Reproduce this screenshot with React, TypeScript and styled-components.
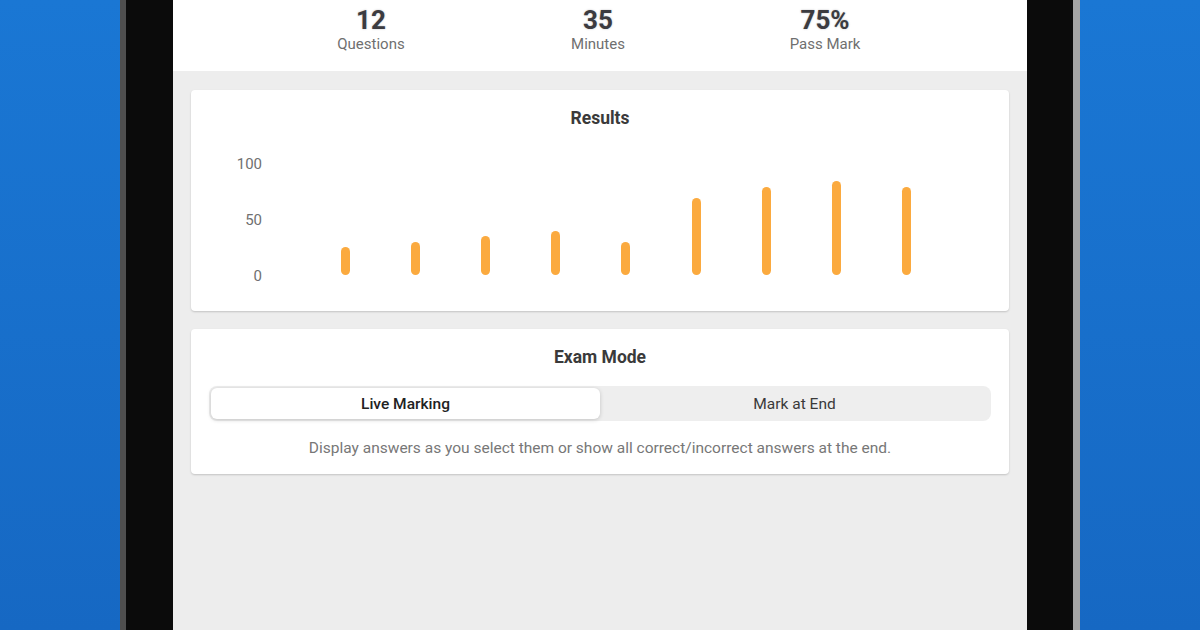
import React from 'react';
import styled, { createGlobalStyle } from 'styled-components';

const GlobalStyle = createGlobalStyle`
  html, body {
    margin: 0;
    padding: 0;
  }
  body {
    font-family: Roboto, "Noto Sans", "Liberation Sans", sans-serif;
  }
`;

const Page = styled.div`
  width: 1200px;
  height: 630px;
  overflow: hidden;
  display: flex;
  justify-content: center;
  background: linear-gradient(180deg, #1a77d4 0%, #1668c3 100%);
`;

const Device = styled.div`
  width: 960px;
  height: 630px;
  box-sizing: border-box;
  display: flex;
  background: #0b0b0b;
  border-left: 6px solid #4f4f4f;
  border-right: 7px solid #a4a4a4;
  padding: 0 46px 0 47px;
`;

const Screen = styled.div`
  flex: 1;
  display: flex;
  flex-direction: column;
  background: #ededed;
`;

const Header = styled.div`
  height: 71px;
  box-sizing: border-box;
  background: #ffffff;
  display: flex;
  align-items: flex-end;
  justify-content: center;
  padding-bottom: 18px;
`;

const StatsRow = styled.div`
  display: grid;
  grid-template-columns: repeat(3, 227px);
  transform: translateX(-2px);
`;

const Stat = styled.div`
  display: flex;
  flex-direction: column;
  align-items: center;
`;

const StatValue = styled.div`
  font-size: 26px;
  line-height: 30px;
  font-weight: 700;
  color: #3b3b40;
  text-shadow: 0 0 2px rgba(60, 60, 70, 0.35);
`;

const StatLabel = styled.div`
  font-size: 15px;
  line-height: 18px;
  color: #6f6f6f;
`;

const Body = styled.div`
  display: flex;
  flex-direction: column;
  gap: 18px;
  padding: 19px 18px 0;
`;

const Card = styled.div`
  background: #ffffff;
  border-radius: 4px;
  box-shadow: 0 1px 2px rgba(0, 0, 0, 0.18);
  display: flex;
  flex-direction: column;
  padding: 18px 18px 16px;
`;

const CardTitle = styled.div`
  font-size: 17.5px;
  line-height: 20px;
  font-weight: 700;
  color: #3a3a3a;
  text-align: center;
`;

const Chart = styled.div`
  display: flex;
  margin: 27px 0 10px -18px;
  height: 130px;
`;

const YAxis = styled.div`
  width: 71px;
  display: flex;
  flex-direction: column;
  justify-content: space-between;
  align-items: flex-end;
  font-size: 15px;
  line-height: 18px;
  color: #707070;
`;

const Plot = styled.div`
  margin-left: 48px;
  width: 632px;
  display: grid;
  grid-template-columns: repeat(9, 1fr);
  padding-bottom: 10px;
`;

const BarCell = styled.div`
  display: flex;
  align-items: flex-end;
  justify-content: center;
`;

const Bar = styled.div`
  width: 9px;
  border-radius: 5px;
  background: #fbaa3f;
`;

const Toggle = styled.div`
  margin-top: 19px;
  height: 35px;
  box-sizing: border-box;
  padding: 2px;
  border-radius: 8px;
  background: #eeeeee;
  display: grid;
  grid-template-columns: 1fr 1fr;
`;

const Segment = styled.div<{ $active?: boolean }>`
  display: flex;
  align-items: center;
  justify-content: center;
  border-radius: 6px;
  font-size: 15.5px;
  font-weight: ${p => (p.$active ? 500 : 400)};
  color: ${p => (p.$active ? '#222222' : '#3a3a3a')};
  background: ${p => (p.$active ? '#ffffff' : 'transparent')};
  box-shadow: ${p => (p.$active ? '0 1px 4px rgba(0,0,0,0.18)' : 'none')};
`;

const Description = styled.div`
  margin-top: 17px;
  font-size: 15.5px;
  line-height: 20px;
  color: #777777;
  text-align: center;
`;

const stats = [
  { value: '12', label: 'Questions' },
  { value: '35', label: 'Minutes' },
  { value: '75%', label: 'Pass Mark' },
];

const results = [25, 30, 35, 40, 30, 70, 80, 85, 80];

const App = () => {
  return (
    <>
      <GlobalStyle />
      <Page>
        <Device>
          <Screen>
            <Header>
              <StatsRow>
                {stats.map(s => (
                  <Stat key={s.label}>
                    <StatValue>{s.value}</StatValue>
                    <StatLabel>{s.label}</StatLabel>
                  </Stat>
                ))}
              </StatsRow>
            </Header>
            <Body>
              <Card>
                <CardTitle>Results</CardTitle>
                <Chart>
                  <YAxis>
                    <span>100</span>
                    <span>50</span>
                    <span>0</span>
                  </YAxis>
                  <Plot>
                    {results.map((v, i) => (
                      <BarCell key={i}>
                        <Bar style={{ height: `${Math.round(v * 1.1)}px` }} />
                      </BarCell>
                    ))}
                  </Plot>
                </Chart>
              </Card>
              <Card>
                <CardTitle>Exam Mode</CardTitle>
                <Toggle>
                  <Segment $active>Live Marking</Segment>
                  <Segment>Mark at End</Segment>
                </Toggle>
                <Description>
                  Display answers as you select them or show all correct/incorrect answers at the end.
                </Description>
              </Card>
            </Body>
          </Screen>
        </Device>
      </Page>
    </>
  );
};

export default App;
